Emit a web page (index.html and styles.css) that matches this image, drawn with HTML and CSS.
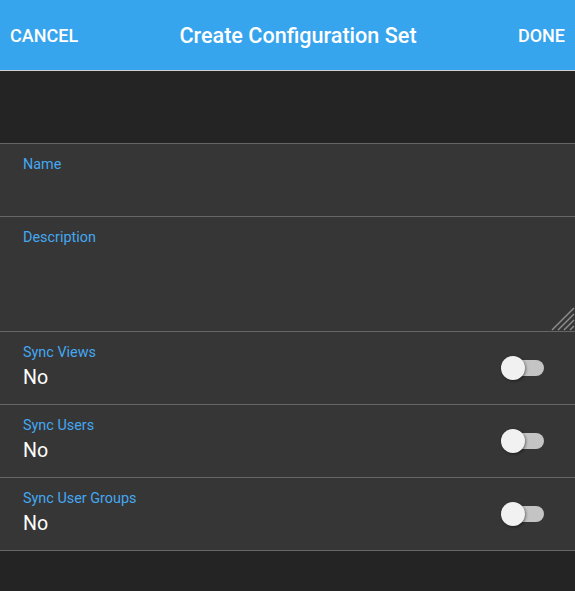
FILE: index.html
```html
<!DOCTYPE html>
<html>
<head>
<meta charset="utf-8">
<link rel="stylesheet" href="styles.css">
</head>
<body>
<div class="app">
  <header class="topbar">
    <span class="btn">CANCEL</span>
    <span class="title">Create Configuration Set</span>
    <span class="btn">DONE</span>
  </header>
  <div class="spacer"></div>
  <div class="form">
    <div class="field">
      <div class="label">Name</div>
    </div>
    <div class="field field-desc">
      <div class="label">Description</div>
      <svg class="resize" width="24" height="24" viewBox="0 0 24 24">
        <g stroke="#8a8a8a" stroke-width="1.6">
          <line x1="1" y1="23" x2="23" y2="1"/>
          <line x1="7" y1="23" x2="23" y2="7"/>
          <line x1="13" y1="23" x2="23" y2="13"/>
          <line x1="19" y1="23" x2="23" y2="19"/>
        </g>
      </svg>
    </div>
    <div class="field row">
      <div class="text">
        <div class="label">Sync Views</div>
        <div class="value">No</div>
      </div>
      <div class="toggle"><span class="track"></span><span class="knob"></span></div>
    </div>
    <div class="field row">
      <div class="text">
        <div class="label">Sync Users</div>
        <div class="value">No</div>
      </div>
      <div class="toggle"><span class="track"></span><span class="knob"></span></div>
    </div>
    <div class="field row">
      <div class="text">
        <div class="label">Sync User Groups</div>
        <div class="value">No</div>
      </div>
      <div class="toggle"><span class="track"></span><span class="knob"></span></div>
    </div>
  </div>
</div>
</body>
</html>
```
FILE: styles.css
```css
html, body {
  margin: 0;
  padding: 0;
  background: #242424;
  font-family: Roboto, "Liberation Sans", sans-serif;
}
.app {
  width: 575px;
  height: 591px;
  background: #242424;
  overflow: hidden;
}
.topbar {
  height: 70px;
  background: #37a4ee;
  border-bottom: 1px solid #d0d0d0;
  display: flex;
  align-items: center;
  justify-content: space-between;
  padding: 0 10px;
  color: #fff;
}
.btn {
  font-size: 18px;
  font-weight: 500;
}
.title {
  font-size: 21.6px;
  font-weight: 500;
}
.spacer {
  height: 72px;
  border-bottom: 1px solid #666;
}
.form {
  background: #363636;
}
.field {
  height: 72px;
  border-bottom: 1px solid #666;
  padding: 0 23px;
  box-sizing: content-box;
  position: relative;
}
.label {
  color: #44a8f2;
  font-size: 14.4px;
  padding-top: 12px;
  line-height: 17px;
}
.field-desc {
  height: 114px;
}
.resize {
  position: absolute;
  right: 0;
  bottom: 0;
}
.row {
  display: flex;
  justify-content: space-between;
  align-items: center;
  padding-right: 31px;
}
.row .text {
  align-self: flex-start;
}
.value {
  color: #fff;
  font-size: 19.6px;
  line-height: 24px;
  padding-top: 5px;
}
.toggle {
  width: 43px;
  height: 24px;
  position: relative;
}
.track {
  position: absolute;
  left: 9px;
  top: 4px;
  width: 34px;
  height: 16px;
  border-radius: 8px;
  background: #c4c4c4;
}
.knob {
  position: absolute;
  left: 0;
  top: 0;
  width: 24px;
  height: 24px;
  border-radius: 50%;
  background: #f1f1f1;
  box-shadow: 1px 1px 3px rgba(0,0,0,0.45);
}
```
